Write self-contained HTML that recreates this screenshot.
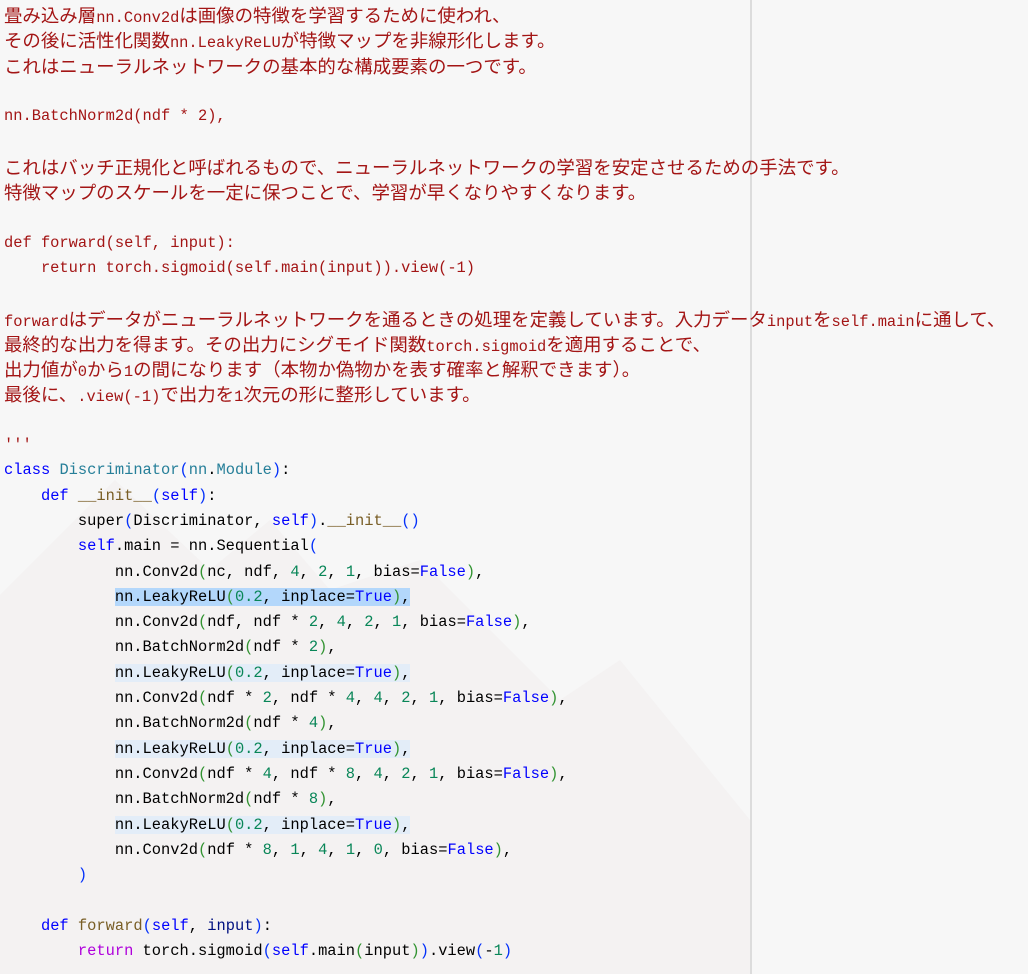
<!DOCTYPE html>
<html><head><meta charset="utf-8"><style>
html,body{margin:0;padding:0;}
body{width:1028px;height:974px;background:#f7f7f7;position:relative;overflow:hidden;}
#wm{position:absolute;left:0;top:0;}
#vl{position:absolute;left:750px;top:0;width:2px;height:974px;background:#dcdcdc;}
#code{position:absolute;left:4px;top:3px;font-family:"Liberation Mono","Noto Sans CJK JP",monospace;font-size:15.4px;color:#000;}
.l{height:25.3px;line-height:25.3px;white-space:pre;}
.s{color:#a31515;}
.j{font-family:"Noto Sans CJK JP","Liberation Sans",sans-serif;font-size:18.45px;}
.k{color:#0000ff;}
.c{color:#267f99;}
.f{color:#795e26;}
.n{color:#098658;}
.r{color:#af00db;}
.p{color:#001080;}
.b1{color:#0431fa;}
.b2{color:#319331;}
.h1{background:#b3d7fb;}
.h2{background:#e3edf8;}
</style></head><body>
<svg id="wm" width="750" height="974"><polygon fill="#f1eeee" opacity="0.6" points="0,595 115,480 210,570 270,520 330,590 420,560 560,700 620,660 750,820 750,974 0,974"/></svg>
<div id="vl"></div>
<div id="code">
<div class="l s"><span class="j">畳み込み層</span>nn.Conv2d<span class="j">は画像の特徴を学習するために使われ、</span></div>
<div class="l s"><span class="j">その後に活性化関数</span>nn.LeakyReLU<span class="j">が特徴マップを非線形化します。</span></div>
<div class="l s"><span class="j">これはニューラルネットワークの基本的な構成要素の一つです。</span></div>
<div class="l"> </div>
<div class="l s">nn.BatchNorm2d(ndf * 2),</div>
<div class="l"> </div>
<div class="l s"><span class="j">これはバッチ正規化と呼ばれるもので、ニューラルネットワークの学習を安定させるための手法です。</span></div>
<div class="l s"><span class="j">特徴マップのスケールを一定に保つことで、学習が早くなりやすくなります。</span></div>
<div class="l"> </div>
<div class="l s">def forward(self, input):</div>
<div class="l s">    return torch.sigmoid(self.main(input)).view(-1)</div>
<div class="l"> </div>
<div class="l s">forward<span class="j">はデータがニューラルネットワークを通るときの処理を定義しています。入力データ</span>input<span class="j">を</span>self.main<span class="j">に通して、</span></div>
<div class="l s"><span class="j">最終的な出力を得ます。その出力にシグモイド関数</span>torch.sigmoid<span class="j">を適用することで、</span></div>
<div class="l s"><span class="j">出力値が</span>0<span class="j">から</span>1<span class="j">の間になります（本物か偽物かを表す確率と解釈できます）。</span></div>
<div class="l s"><span class="j">最後に、</span>.view(-1)<span class="j">で出力を</span>1<span class="j">次元の形に整形しています。</span></div>
<div class="l"> </div>
<div class="l s">'''</div>
<div class="l"><span class="k">class</span> <span class="c">Discriminator</span><span class="b1">(</span><span class="c">nn</span>.<span class="c">Module</span><span class="b1">)</span>:</div>
<div class="l">    <span class="k">def</span> <span class="f">__init__</span><span class="b1">(</span><span class="k">self</span><span class="b1">)</span>:</div>
<div class="l">        super<span class="b1">(</span>Discriminator, <span class="k">self</span><span class="b1">)</span>.<span class="f">__init__</span><span class="b1">()</span></div>
<div class="l">        <span class="k">self</span>.main = nn.Sequential<span class="b1">(</span></div>
<div class="l">            nn.Conv2d<span class="b2">(</span>nc, ndf, <span class="n">4</span>, <span class="n">2</span>, <span class="n">1</span>, bias=<span class="k">False</span><span class="b2">)</span>,</div>
<div class="l">            <span class="h1">nn.LeakyReLU<span class="b2">(</span><span class="n">0.2</span>, inplace=<span class="k">True</span><span class="b2">)</span>,</span></div>
<div class="l">            nn.Conv2d<span class="b2">(</span>ndf, ndf * <span class="n">2</span>, <span class="n">4</span>, <span class="n">2</span>, <span class="n">1</span>, bias=<span class="k">False</span><span class="b2">)</span>,</div>
<div class="l">            nn.BatchNorm2d<span class="b2">(</span>ndf * <span class="n">2</span><span class="b2">)</span>,</div>
<div class="l">            <span class="h2">nn.LeakyReLU<span class="b2">(</span><span class="n">0.2</span>, inplace=<span class="k">True</span><span class="b2">)</span>,</span></div>
<div class="l">            nn.Conv2d<span class="b2">(</span>ndf * <span class="n">2</span>, ndf * <span class="n">4</span>, <span class="n">4</span>, <span class="n">2</span>, <span class="n">1</span>, bias=<span class="k">False</span><span class="b2">)</span>,</div>
<div class="l">            nn.BatchNorm2d<span class="b2">(</span>ndf * <span class="n">4</span><span class="b2">)</span>,</div>
<div class="l">            <span class="h2">nn.LeakyReLU<span class="b2">(</span><span class="n">0.2</span>, inplace=<span class="k">True</span><span class="b2">)</span>,</span></div>
<div class="l">            nn.Conv2d<span class="b2">(</span>ndf * <span class="n">4</span>, ndf * <span class="n">8</span>, <span class="n">4</span>, <span class="n">2</span>, <span class="n">1</span>, bias=<span class="k">False</span><span class="b2">)</span>,</div>
<div class="l">            nn.BatchNorm2d<span class="b2">(</span>ndf * <span class="n">8</span><span class="b2">)</span>,</div>
<div class="l">            <span class="h2">nn.LeakyReLU<span class="b2">(</span><span class="n">0.2</span>, inplace=<span class="k">True</span><span class="b2">)</span>,</span></div>
<div class="l">            nn.Conv2d<span class="b2">(</span>ndf * <span class="n">8</span>, <span class="n">1</span>, <span class="n">4</span>, <span class="n">1</span>, <span class="n">0</span>, bias=<span class="k">False</span><span class="b2">)</span>,</div>
<div class="l">        <span class="b1">)</span></div>
<div class="l"> </div>
<div class="l">    <span class="k">def</span> <span class="f">forward</span><span class="b1">(</span><span class="k">self</span>, <span class="p">input</span><span class="b1">)</span>:</div>
<div class="l">        <span class="r">return</span> torch.sigmoid<span class="b1">(</span><span class="k">self</span>.main<span class="b2">(</span>input<span class="b2">)</span><span class="b1">)</span>.view<span class="b1">(</span>-<span class="n">1</span><span class="b1">)</span></div>
</div>
</body></html>
